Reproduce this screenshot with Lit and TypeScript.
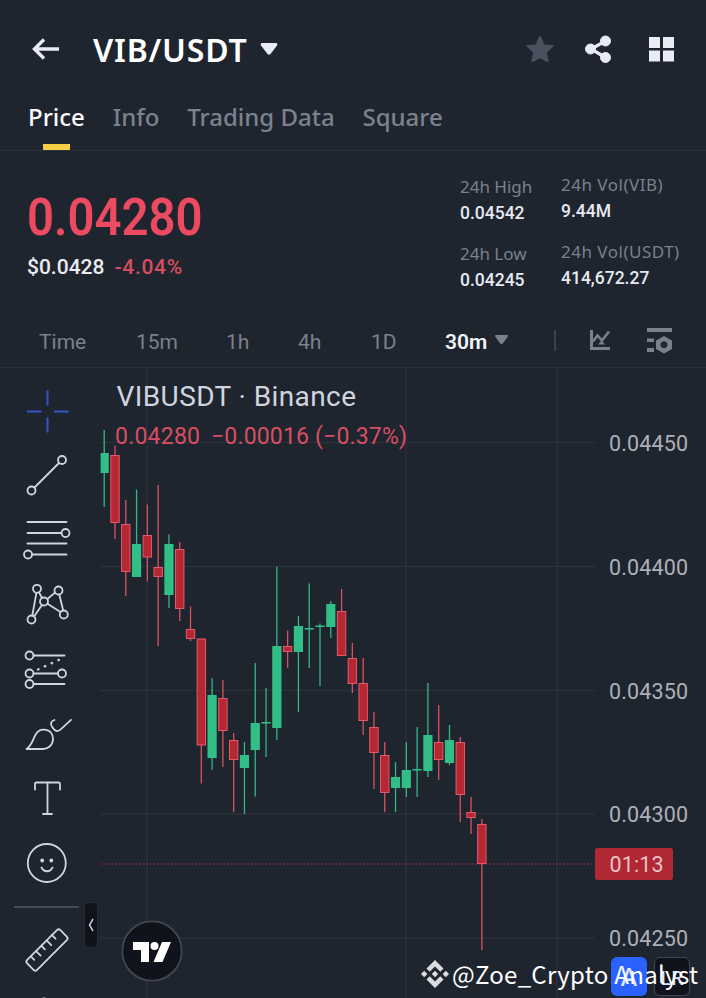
import { LitElement, html, css, svg } from "lit";
import { customElement, property } from "lit/decorators.js";

// high, body top, body bottom, low (in page rows), rising
type Candle = [number, number, number, number, boolean];

const CANDLES: Candle[] = [
  [430, 453, 473, 507, true],
  [445.5, 455, 523, 539, false],
  [500, 524, 572, 596, false],
  [489.5, 544, 577, 577, true],
  [504.5, 535, 557.5, 581.5, false],
  [485, 567, 577, 646, false],
  [534.5, 544, 595, 608, true],
  [542, 549, 609, 621, false],
  [606.5, 629, 639, 641, false],
  [638.5, 638.5, 745.5, 783.5, false],
  [678, 695, 758, 770, true],
  [680, 698, 731, 767, false],
  [733, 740, 760, 812, false],
  [742, 755, 768, 814, true],
  [663, 723, 750, 796.5, true],
  [688, 722, 723.5, 757, true],
  [566.5, 646, 728, 740, true],
  [630.5, 646, 652, 668, false],
  [616, 626, 652, 712, true],
  [583.5, 628, 629.5, 668, true],
  [623.5, 625.5, 627, 686, true],
  [601, 604, 627, 638, true],
  [589, 611, 656, 656, false],
  [643, 658, 684, 693, false],
  [658, 683, 721, 735, false],
  [712, 727, 753, 789, false],
  [742, 755, 793, 812, false],
  [762, 777, 788, 812, true],
  [742, 770, 788, 797, true],
  [727, 769, 770.5, 797, true],
  [683, 735, 771, 777, true],
  [705, 742, 760, 780, false],
  [725, 740, 763, 765, true],
  [737, 742, 795, 822, false],
  [797, 812, 818, 834, false],
  [819, 824, 864, 950, false],
];

const TOP = 368;
const STEP = 10.79;

const LEVELS: [string, number][] = [
  ["0.04450", 442.5],
  ["0.04400", 566.5],
  ["0.04350", 690.5],
  ["0.04300", 814],
  ["0.04250", 938],
];

@customElement("price-chart")
export class PriceChart extends LitElement {
  static styles = css`
    :host {
      display: block;
      width: 606px;
      height: 630px;
    }

    svg {
      display: block;
    }

    .grid {
      stroke: #2b313b;
      stroke-width: 1.4;
    }

    .up {
      fill: #32be87;
      stroke: none;
    }

    .down {
      fill: #b52733;
      stroke: #e4596a;
      stroke-width: 1;
    }

    .wick-up {
      stroke: #37b583;
      stroke-width: 1.3;
    }

    .wick-down {
      stroke: #d9525f;
      stroke-width: 1.3;
    }

    .last {
      stroke: #a83a46;
      stroke-width: 1.2;
      stroke-dasharray: 1.5 2;
    }

    text {
      font-family: Roboto, "Liberation Sans", sans-serif;
      font-size: 21.5px;
      fill: #adb0b9;
    }

    .title {
      font-size: 28px;
      fill: #d0d4df;
    }

    .change {
      font-size: 23px;
      fill: #d64f60;
    }

    .timer {
      fill: #e9c3c8;
    }
  `;

  private _candle(c: Candle, i: number) {
    const [high, top, bottom, low, rising] = c;
    const x = 104.2 + i * STEP;
    const inset = rising ? 4.6 : 4.2;
    const left = i === 0 ? x - 3.6 : x - inset;
    const kind = rising ? "up" : "down";
    return svg`
      <line class="wick-${kind}" x1=${x} x2=${x} y1=${high} y2=${low} />
      <rect class=${kind} x=${left} y=${rising ? top : top + 0.5}
        width=${x + inset - left} height=${rising ? bottom - top : bottom - top - 1} />
    `;
  }

  render() {
    return html`<svg width="606" height="630" viewBox="100 ${TOP} 606 630">
      ${LEVELS.map(
        ([, y]) => svg`<line class="grid" x1="100" x2="595" y1=${y} y2=${y} />`
      )}
      ${[147, 406, 557].map(
        (x) => svg`<line class="grid" x1=${x} x2=${x} y1="368" y2="998" />`
      )}
      <line class="last" x1="101" x2="595" y1="864" y2="864" />
      ${CANDLES.map((c, i) => this._candle(c, i))}
      <text class="title" x="116.5" y="406" textLength="239.5">
        VIBUSDT · Binance
      </text>
      <text class="change" x="115" y="444" textLength="85">0.04280</text>
      <text class="change" x="211" y="444" textLength="196">
        −0.00016 (−0.37%)
      </text>
      ${LEVELS.map(
        ([label, y]) =>
          svg`<text x="609" y=${y + 8} textLength="79">${label}</text>`
      )}
      <rect x="595" y="848" width="78" height="32" rx="3" fill="#b12835" />
      <text class="timer" x="609.5" y="872" textLength="54">01:13</text>
    </svg>`;
  }
}

const TOOLS = [
  // crosshair
  svg`<g stroke="#3457c8" stroke-width="2" stroke-linecap="butt"><path d="M24.500 3.500v15M24.500 30.500v15M4 24.500h14.500M31 24.500h14.500" /></g>`,
  // trend line
  svg`<circle cx="39" cy="9" r="4" /><circle cx="8.500" cy="39.500" r="4" /><path d="M36 12 11.500 36.500" />`,
  // fib levels
  svg`<path d="M4.500 6h39M4.500 17h34M4.500 27.500h39M9 38.500h34.500" /><circle cx="42.500" cy="17" r="4" /><circle cx="5" cy="38.500" r="4" />`,
  // pattern
  svg`<circle cx="14" cy="7.800" r="4" /><circle cx="35.500" cy="9.500" r="4" /><circle cx="21" cy="20.500" r="4" /><circle cx="8.500" cy="38.500" r="4" /><circle cx="40.800" cy="33.500" r="4" /><path d="M13.400 11.800 9.300 34.500M16 11.300l3 5.700M32 11.600l-7.700 6.400M36.300 13.500l3.900 16M24.500 22.800l13 8.200M19 24 11 35.500" />`,
  // forecast
  svg`<circle cx="6.500" cy="10.500" r="4" /><circle cx="6.500" cy="28.500" r="4" /><circle cx="39" cy="28.500" r="4" /><circle cx="6.500" cy="39" r="4" /><path d="M10.500 10.500H41.500M10.500 28.500H35M10.500 39h31" /><path d="m15 24.500 24-11" stroke-width="2.400" stroke-dasharray=".5 7" />`,
  // brush
  svg`<path d="M3.500 39c6-4.500 6-9.500 9.500-15C17.500 16.500 30 19 30 29c0 6-5 10-10 10ZM31.500 10c-4 1.500-4.500 4-2 7.500 3 4.500 5.500 4.500 8.500 1.700L48 9.800" />`,
  // text
  svg`<path d="M12 15.500V10q0-1.500 1.500-1.500h22q1.500 0 1.500 1.500v5.500M24.500 9v31M20 40h9" />`,
  // smiley
  svg`<circle cx="23.800" cy="24" r="19" /><path d="M18.500 28.500c2.500 5 8.500 5 11 0" /><g fill="#d0d4df" stroke="none"><circle cx="19.200" cy="21.500" r="1.900" /><circle cx="28.300" cy="21.500" r="1.900" /></g>`,
];

@customElement("drawing-tools")
export class DrawingTools extends LitElement {
  static styles = css`
    :host {
      display: flex;
      flex-direction: column;
      width: 100px;
      height: 630px;
      box-sizing: border-box;
      padding-top: 10.5px;
      overflow: hidden;
    }

    svg {
      flex: none;
      width: 48px;
      height: 48px;
      margin: 8.3px 0 8.3px 23px;
      fill: none;
      stroke: #d0d4df;
      stroke-width: 1.8;
      stroke-linecap: round;
      stroke-linejoin: round;
      overflow: visible;
    }

    .divider {
      flex: none;
      width: 65px;
      height: 2px;
      margin: 11px 0 9px 14px;
      background: #444955;
    }
  `;

  render() {
    return html`
      ${TOOLS.map((t) => html`<svg viewBox="0 0 48 48">${t}</svg>`)}
      <div class="divider"></div>
      <svg viewBox="0 0 48 48">
        <g transform="rotate(-45 24 24)">
          <rect x="0.500" y="17" width="47" height="14" rx="2.500" />
          <path d="M8 17v5M15.500 17v6.500M23 17v5M30.500 17v6.500M38 17v5" />
        </g>
      </svg>
      <svg viewBox="0 0 48 48"><circle cx="21" cy="16.500" r="8" /></svg>
    `;
  }
}

@customElement("market-stat")
export class MarketStat extends LitElement {
  static styles = css`
    :host {
      display: block;
      white-space: nowrap;
      font-family: "Noto Sans", sans-serif;
      font-size: 17px;
      line-height: 24px;
      color: #7b808c;
    }

    .value {
      font-family: Roboto, sans-serif;
      font-weight: 500;
      font-size: 17.5px;
      line-height: 28px;
      letter-spacing: 0;
      color: #e6e9f1;
    }
  `;

  @property({ type: String })
  label = "";

  @property({ type: String })
  value = "";

  render() {
    return html`<div>${this.label}</div>
      <div class="value">${this.value}</div>`;
  }
}

@customElement("app-root")
export class AppRoot extends LitElement {
  static styles = css`
    :host {
      display: block;
      position: relative;
      width: 706px;
      height: 998px;
      overflow: hidden;
      background: #1f252f;
      font-family: "Noto Sans", sans-serif;
      color: #eaecf3;
    }

    .header {
      display: flex;
      align-items: center;
      height: 98px;
      box-sizing: border-box;
      padding: 0 32px;
    }

    .header svg,
    .intervals svg {
      display: block;
      flex: none;
    }

    .pair {
      margin: 1px 12px 0 32px;
      width: 155px;
      white-space: nowrap;
      font-size: 32px;
      font-weight: 600;
      letter-spacing: 0.8px;
      color: #fff;
    }

    .actions {
      display: flex;
      align-items: center;
      gap: 30px;
      margin-left: auto;
    }

    .header .apps {
      margin: 0 -1.5px 0 1.5px;
    }

    .tabs {
      display: flex;
      gap: 27.8px;
      height: 53px;
      box-sizing: border-box;
      padding-left: 28px;
      border-bottom: 1px solid #2b313a;
      font-size: 24px;
      font-weight: 500;
      line-height: 38px;
      color: #7d818e;
      white-space: nowrap;
    }

    .tab {
      display: flex;
      flex-direction: column;
      align-items: center;
    }

    .tab.active {
      color: #fafbff;
    }

    .tab.active::after {
      content: "";
      width: 27px;
      height: 6px;
      margin-top: 8px;
      background: #f5d046;
    }

    .ticker {
      display: flex;
      height: 164px;
    }

    .quote {
      width: 433px;
      padding-left: 27px;
      font-family: Roboto, sans-serif;
    }

    .price {
      margin-top: 38px;
      font-size: 52px;
      line-height: 58px;
      font-weight: 600;
      color: #eb4a60;
      transform: scaleX(0.91);
      transform-origin: left;
    }

    .sub {
      display: flex;
      gap: 10px;
      margin-top: 7px;
      font-size: 21px;
      line-height: 26px;
      font-weight: 500;
    }

    .fall {
      letter-spacing: 0.7px;
      color: #d74d60;
    }

    .col {
      display: flex;
      flex-direction: column;
      gap: 15px;
      width: 101px;
      padding-top: 24px;
    }

    .col.wide {
      padding-top: 22px;
      letter-spacing: 0.5px;
    }

    .intervals {
      display: flex;
      align-items: center;
      height: 53px;
      box-sizing: border-box;
      padding-left: 39px;
      border-bottom: 1px solid #2b313a;
      font-family: Roboto, sans-serif;
      font-size: 21px;
      color: #7b808c;
      white-space: nowrap;
    }

    .intervals span {
      flex: none;
      padding-top: 1px;
    }

    .w-time {
      width: 97px;
    }

    .w-15m {
      width: 90px;
    }

    .w-1h {
      width: 72px;
    }

    .w-4h {
      width: 73px;
    }

    .w-1d {
      width: 74px;
    }

    .selected {
      width: 50px;
      font-weight: 600;
      color: #f3f5fa;
    }

    .rule {
      width: 1.5px;
      height: 21px;
      margin: 0 33px 2px 46px;
      background: #3b404b;
    }

    .indicators,
    .caret {
      margin-bottom: 3px;
    }

    .settings {
      margin: 0 0 2px 36px;
    }

    .chart {
      display: flex;
      height: 630px;
    }

    .handle {
      position: absolute;
      left: 84px;
      top: 902px;
    }

    .logo {
      position: absolute;
      left: 121px;
      top: 920px;
    }

    .modes {
      position: absolute;
      left: 611px;
      top: 957px;
      display: flex;
      gap: 7px;
      font-size: 25px;
      font-weight: 500;
      line-height: 39px;
      text-align: center;
      color: #dfe4f5;
    }

    .auto {
      width: 36px;
      height: 39px;
      border-radius: 6px;
      background: #2962ff;
    }

    .log {
      width: 34px;
      height: 37px;
      font-size: 20px;
      line-height: 39px;
      border: 1px solid #42464f;
      border-radius: 6px;
      background: #10131c;
    }

    .credit {
      position: absolute;
      left: 421px;
      top: 959px;
      display: flex;
      align-items: center;
      gap: 3px;
      font-family: "Noto Sans CJK SC", sans-serif;
      font-size: 24px;
      line-height: 29px;
      letter-spacing: 0.3px;
      color: #fff;
      white-space: nowrap;
    }
  `;

  private _header() {
    return html`<div class="header">
      <svg width="29" height="24" viewBox="0 0 29 24" fill="none" stroke="#eaecf5" stroke-width="3.400">
        <path d="M12 2.500 2.500 12l9.500 9.500M3 12h24" />
      </svg>
      <div class="pair">VIB/USDT</div>
      <svg width="18" height="14" viewBox="0 0 18 14" fill="#eaecf5">
        <path d="M2 1h14q2 0 1 2.500L10.500 12Q9 13.500 7.500 12L1 3.500Q0 1 2 1Z" />
      </svg>
      <div class="actions">
        <svg width="28" height="28" viewBox="0 0 28 28" fill="#4a505d" stroke="#4a505d" stroke-width="2" stroke-linejoin="round">
          <path d="m14 2 3.500 8.200 9 .8-6.800 6 2 9L14 22.200 6.300 26l2-9-6.800-6 9-.8Z" />
        </svg>
        <svg width="28" height="28" viewBox="0 0 28 28" fill="#eaecf5" stroke="#eaecf5">
          <path d="M21.500 6 7 14l14.500 8.500" fill="none" stroke-width="3.200" />
          <circle cx="6.500" cy="14" r="5" />
          <circle cx="21.500" cy="6" r="5" />
          <circle cx="21.500" cy="22.500" r="5" />
        </svg>
        <svg class="apps" width="32" height="26" viewBox="-5 0 32 26" fill="#eaecf5">
          <path d="M0 1h11v11H0zM14 1h11v11H14zM0 14.500h11v11H0zM14 14.500h11v11H14z" />
        </svg>
      </div>
    </div>`;
  }

  private _intervals() {
    return html`<div class="intervals">
      <span class="w-time">Time</span>
      <span class="w-15m">15m</span>
      <span class="w-1h">1h</span>
      <span class="w-4h">4h</span>
      <span class="w-1d">1D</span>
      <span class="selected">30m</span>
      <svg class="caret" width="13" height="10" viewBox="0 0 13 10" fill="#7b808c">
        <path d="M1 0h11q1.500 0 .500 2L7.800 8.500q-1.300 1.500-2.600 0L.500 2Q-.500 0 1 0Z" />
      </svg>
      <div class="rule"></div>
      <svg class="indicators" width="22" height="22" viewBox="0 0 22 22" fill="none" stroke="#7b808c" stroke-width="3">
        <path d="M2.500 1v18.500H21" />
        <path d="m4 12.500 4.500-6 4.500 5 7-9" stroke-width="2.600" />
        <path d="M9 15.500h7l-3.500-4Z" fill="#7b808c" stroke="none" />
      </svg>
      <svg class="settings" width="26" height="27" viewBox="0 0 26 27" fill="#7b808c">
        <path d="M0 1h25v4H0zM0 11.500h7v3.500H0zM0 21h7v4H0z" />
        <path fill-rule="evenodd" d="m17 9 8 4.500v8.500L17 26.500 9 22v-8.500ZM17 14.300a3.500 3.500 0 1 0 .01 0Z" />
      </svg>
    </div>`;
  }

  render() {
    return html`
      ${this._header()}
      <div class="tabs">
        <div class="tab active">Price</div>
        <div class="tab">Info</div>
        <div class="tab">Trading Data</div>
        <div class="tab">Square</div>
      </div>
      <div class="ticker">
        <div class="quote">
          <div class="price">0.04280</div>
          <div class="sub"><span>$0.0428</span><span class="fall">-4.04%</span></div>
        </div>
        <div class="col">
          <market-stat label="24h High" value="0.04542"></market-stat>
          <market-stat label="24h Low" value="0.04245"></market-stat>
        </div>
        <div class="col wide">
          <market-stat label="24h Vol(VIB)" value="9.44M"></market-stat>
          <market-stat label="24h Vol(USDT)" value="414,672.27"></market-stat>
        </div>
      </div>
      ${this._intervals()}
      <div class="chart">
        <drawing-tools></drawing-tools>
        <price-chart></price-chart>
      </div>
      <svg class="handle" width="14" height="46" viewBox="0 0 14 46">
        <rect x="0.500" y="0.500" width="13" height="45" rx="5" fill="#10131c" stroke="#252a35" />
        <path d="m9 17-3.500 6L9 29" fill="none" stroke="#c5c8d2" stroke-width="1.500" />
      </svg>
      <svg class="logo" width="62" height="62" viewBox="0 0 62 62">
        <circle cx="31" cy="31" r="29.700" fill="#10131c" stroke="#42464f" stroke-width="1.800" />
        <path d="M12 22h16v20h-8V30h-8ZM41 22h9l-8.500 20h-9Z" fill="#fff" />
        <circle cx="33.500" cy="26" r="4" fill="#fff" />
      </svg>
      <div class="modes">
        <div class="auto">A</div>
        <div class="log">LR</div>
      </div>
      <div class="credit">
        <svg width="28" height="28" viewBox="0 0 28 28" fill="#dcdde0">
          <path d="m14 0 8.500 8.500-3.200 3.200L14 6.400l-5.300 5.300-3.200-3.200ZM14 28l8.500-8.500-3.200-3.200-5.300 5.300-5.300-5.300-3.200 3.200ZM14 10.800l3.200 3.200-3.200 3.200-3.200-3.200ZM3.200 10.800 6.400 14l-3.200 3.200L0 14ZM24.800 10.800 28 14l-3.200 3.200-3.200-3.200Z" />
        </svg>
        <span>@Zoe_Crypto Analyst</span>
      </div>
    `;
  }
}
